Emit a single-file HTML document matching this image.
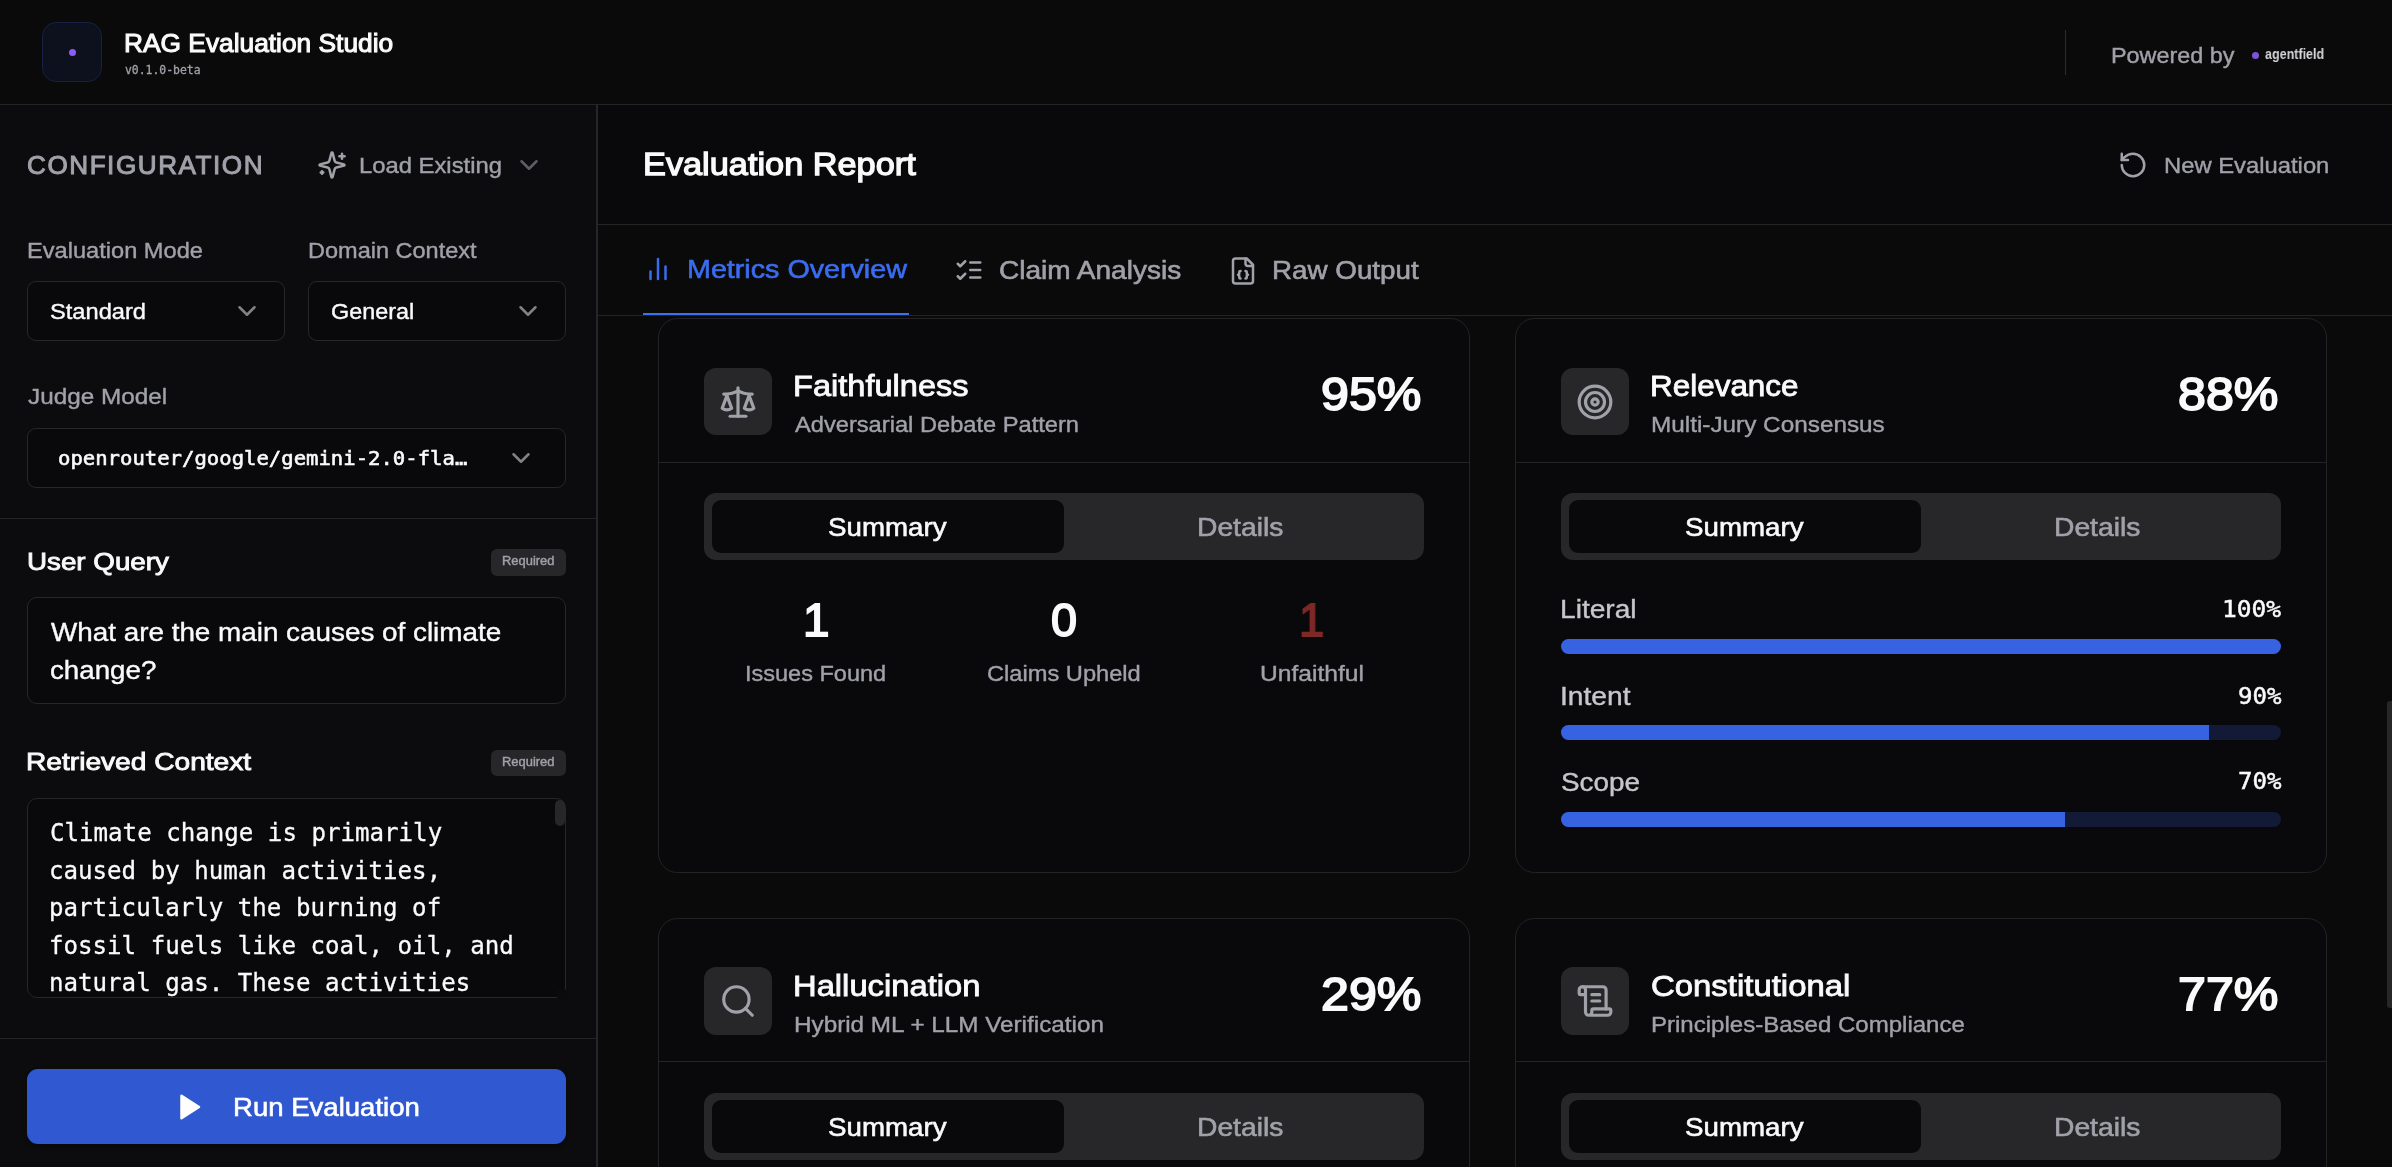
<!DOCTYPE html>
<html lang="en">
<head>
<meta charset="utf-8">
<title>RAG Evaluation Studio</title>
<style>
*{box-sizing:border-box;margin:0;padding:0}
html,body{width:2392px;height:1167px;overflow:hidden;background:#0a0a0a}
body{position:relative;font-family:"Liberation Sans",sans-serif;color:#fafafa}
.a{position:absolute}
.t{position:absolute;white-space:nowrap;line-height:1;transform-origin:0 0;will-change:transform}
.b{font-weight:700}

.mono{font-family:"DejaVu Sans Mono","Liberation Mono",monospace}
.hl{position:absolute;height:1px;background:#242427}
.vl{position:absolute;width:1px;background:#242427}
svg{position:absolute;fill:none;stroke:currentColor;stroke-width:2;stroke-linecap:round;stroke-linejoin:round;overflow:visible}
.i30{width:30px;height:30px}
.i38{width:38px;height:38px;left:15px;top:14.5px;color:#a1a1aa}
.g{color:#a1a1aa}
.sel{position:absolute;height:60px;border:1px solid #27272a;border-radius:9px;background:#09090b}
.badge{position:absolute;left:491px;width:75px;height:26.5px;border-radius:6px;background:#27272a}
.ta{position:absolute;left:27px;width:539px;border:1px solid #27272a;border-radius:10px;background:#09090b}
.card{position:absolute;width:812px;border:1px solid #232326;border-radius:19.5px;background:#09090b}
.ib{position:absolute;width:68px;height:67px;border-radius:12px;background:#27272a}
.seg{position:absolute;width:720px;height:67px;border-radius:12px;background:#27272a}
.seg i{position:absolute;left:8px;top:7px;width:352px;height:53px;border-radius:9px;background:#09090b}
.bar{position:absolute;left:1561px;width:720px;height:15px;border-radius:8px;background:#121a38;overflow:hidden}
.bar i{display:block;height:15px;background:#3763e3}
</style>
</head>
<body>
<!-- HEADER -->
<div class="a" style="left:0;top:0;width:2392px;height:104px;background:#0a0a0a"></div>
<div class="hl" style="left:0;top:104px;width:2392px"></div>
<div class="a" style="left:42px;top:22px;width:60px;height:60px;border-radius:14px;background:#0d101d;border:1px solid #182044"></div>
<div class="a" style="left:68.5px;top:48.5px;width:7px;height:7px;border-radius:50%;background:#8b5cf6"></div>
<div class="a" style="left:2065px;top:30px;width:1px;height:45px;background:#2c2c30"></div>
<div class="a" style="left:2252px;top:51.5px;width:7px;height:7px;border-radius:50%;background:#7c54d8"></div>

<!-- SIDEBAR -->
<div class="a" style="left:0;top:105px;width:596px;height:1062px;background:#0c0c0e"></div>
<div class="a" style="left:598px;top:105px;width:1794px;height:119px;background:#09090b"></div>
<div class="a" style="left:596px;top:105px;width:2px;height:1062px;background:#262629"></div>
<svg class="i30 g" style="left:317.2px;top:150px" viewBox="0 0 24 24"><path d="M9.937 15.5A2 2 0 0 0 8.5 14.063l-6.135-1.582a.5.5 0 0 1 0-.962L8.5 9.936A2 2 0 0 0 9.937 8.5l1.582-6.135a.5.5 0 0 1 .963 0L14.063 8.5A2 2 0 0 0 15.5 9.937l6.135 1.581a.5.5 0 0 1 0 .964L15.5 14.063a2 2 0 0 0-1.437 1.437l-1.582 6.135a.5.5 0 0 1-.963 0z"/><path d="M20 3v4"/><path d="M22 5h-4"/><path d="M4 17v2"/><path d="M5 18H3"/></svg>
<svg class="i30" style="left:514.2px;top:150px;color:#5e5e66" viewBox="0 0 24 24"><path d="m6 9 6 6 6-6"/></svg>

<div class="sel" style="left:27px;top:281px;width:258px"></div>
<svg class="i30" style="left:232px;top:296px;color:#828284" viewBox="0 0 24 24"><path d="m6 9 6 6 6-6"/></svg>
<div class="sel" style="left:308px;top:281px;width:258px"></div>
<svg class="i30" style="left:513px;top:296px;color:#828284" viewBox="0 0 24 24"><path d="m6 9 6 6 6-6"/></svg>
<div class="sel" style="left:27px;top:428px;width:539px"></div>
<svg class="i30" style="left:505.5px;top:443.4px;color:#828284" viewBox="0 0 24 24"><path d="m6 9 6 6 6-6"/></svg>

<div class="hl" style="left:0;top:518px;width:596px"></div>
<div class="badge" style="top:549px"></div>
<div class="ta" style="top:597px;height:107px"></div>
<div class="badge" style="top:749.5px"></div>
<div class="ta" style="top:798px;height:200px"></div>
<div class="a" style="left:555px;top:800px;width:10px;height:26px;border-radius:5px;background:#27272a"></div>
<div class="a" style="left:557px;top:990px;width:10px;height:9px;background:#0b0b0d"></div>
<div class="a" style="left:28px;top:799px;width:526px;height:198px;overflow:hidden;border-radius:9px"><div class="a" style="left:-28px;top:-799px">
<div class="t mono" style="left:50.0px;top:820.9px;font-size:24.13px;-webkit-text-stroke:0.3px">Climate change is primarily</div>
<div class="t mono" style="left:49.0px;top:859.0px;font-size:24.13px;-webkit-text-stroke:0.3px">caused by human activities,</div>
<div class="t mono" style="left:49.0px;top:896.1px;font-size:24.13px;-webkit-text-stroke:0.3px">particularly the burning of</div>
<div class="t mono" style="left:49.0px;top:933.7px;font-size:24.13px;-webkit-text-stroke:0.3px">fossil fuels like coal, oil, and</div>
<div class="t mono" style="left:49.0px;top:971.4px;font-size:24.13px;-webkit-text-stroke:0.3px">natural gas. These activities</div>
</div></div>

<div class="hl" style="left:0;top:1038px;width:596px"></div>
<div class="a" style="left:27px;top:1069px;width:539px;height:75px;border-radius:11px;background:#3059d1;box-shadow:0 2px 4px rgba(0,0,0,.3)"></div>
<svg class="i30" style="left:173.5px;top:1092px;fill:#fff;stroke:#fff" viewBox="0 0 24 24"><polygon points="6 3 20 12 6 21 6 3"/></svg>

<!-- MAIN -->
<svg class="i30 g" style="left:2117.5px;top:150px" viewBox="0 0 24 24"><path d="M3 12a9 9 0 1 0 9-9 9.75 9.75 0 0 0-6.74 2.74L3 8"/><path d="M3 3v5h5"/></svg>
<div class="hl" style="left:598px;top:224px;width:1794px"></div>
<svg class="i30" style="left:643px;top:254px;color:#3b6cf0" viewBox="0 0 24 24"><path d="M18 20V10"/><path d="M12 20V4"/><path d="M6 20v-6"/></svg>
<svg class="i30 g" style="left:954px;top:255px" viewBox="0 0 24 24"><path d="m3 17 2 2 4-4"/><path d="m3 7 2 2 4-4"/><path d="M13 6h8"/><path d="M13 12h8"/><path d="M13 18h8"/></svg>
<svg class="i30 g" style="left:1228px;top:255.5px" viewBox="0 0 24 24"><path d="M15 2H6a2 2 0 0 0-2 2v16a2 2 0 0 0 2 2h12a2 2 0 0 0 2-2V7Z"/><path d="M14 2v4a2 2 0 0 0 2 2h4"/><path d="M10 12a1 1 0 0 0-1 1v1a1 1 0 0 1-1 1 1 1 0 0 1 1 1v1a1 1 0 0 0 1 1"/><path d="M14 18a1 1 0 0 0 1-1v-1a1 1 0 0 1 1-1 1 1 0 0 1-1-1v-1a1 1 0 0 0-1-1"/></svg>
<div class="hl" style="left:598px;top:315px;width:1794px"></div>
<div class="a" style="left:643px;top:312.7px;width:266px;height:2.6px;background:#3d6ff3"></div>

<!-- Faithfulness -->
<div class="card" style="left:658px;top:318px;height:555px"></div>
<div class="ib" style="left:704px;top:368px"><svg class="i38" viewBox="0 0 24 24"><path d="m16 16 3-8 3 8c-.87.65-1.92 1-3 1s-2.13-.35-3-1Z"/><path d="m2 16 3-8 3 8c-.87.65-1.92 1-3 1s-2.13-.35-3-1Z"/><path d="M7 21h10"/><path d="M12 3v18"/><path d="M3 7h2c2 0 5-1 7-2 2 1 5 2 7 2h2"/></svg></div>
<div class="hl" style="left:659px;top:462px;width:810px"></div>
<div class="seg" style="left:704px;top:493px"><i></i></div>

<!-- Relevance -->
<div class="card" style="left:1515px;top:318px;height:555px"></div>
<div class="ib" style="left:1561px;top:368px"><svg class="i38" viewBox="0 0 24 24"><circle cx="12" cy="12" r="10"/><circle cx="12" cy="12" r="6"/><circle cx="12" cy="12" r="2"/></svg></div>
<div class="hl" style="left:1516px;top:462px;width:810px"></div>
<div class="seg" style="left:1561px;top:493px"><i></i></div>
<div class="bar" style="top:639px"><i style="width:100%"></i></div>
<div class="bar" style="top:725px"><i style="width:90%"></i></div>
<div class="bar" style="top:812px"><i style="width:70%"></i></div>

<!-- Hallucination -->
<div class="card" style="left:658px;top:917.5px;height:555px"></div>
<div class="ib" style="left:704px;top:967px;height:68px"><svg class="i38" viewBox="0 0 24 24"><circle cx="11" cy="11" r="8"/><path d="m21 21-4.3-4.3"/></svg></div>
<div class="hl" style="left:659px;top:1061px;width:810px"></div>
<div class="seg" style="left:704px;top:1092.5px"><i></i></div>

<!-- Constitutional -->
<div class="card" style="left:1515px;top:917.5px;height:555px"></div>
<div class="ib" style="left:1561px;top:967px;height:68px"><svg class="i38" viewBox="0 0 24 24"><path d="M15 12h-5"/><path d="M15 8h-5"/><path d="M19 17V5a2 2 0 0 0-2-2H4"/><path d="M8 21h12a2 2 0 0 0 2-2v-1a1 1 0 0 0-1-1H11a1 1 0 0 0-1 1v1a2 2 0 1 1-4 0V5a2 2 0 1 0-4 0v2a1 1 0 0 0 1 1h3"/></svg></div>
<div class="hl" style="left:1516px;top:1061px;width:810px"></div>
<div class="seg" style="left:1561px;top:1092.5px"><i></i></div>

<!-- main scrollbar thumb -->
<div class="a" style="left:2387px;top:701px;width:5px;height:307px;border-radius:3px 0 0 3px;background:#27272a"></div>

<!-- TEXT -->
<div class="t" style="left:123.5px;top:30.9px;font-size:25.53px;transform:scaleX(1.0314);-webkit-text-stroke:1.05px">RAG Evaluation Studio</div>
<div class="t mono" style="left:125.2px;top:64.8px;font-size:11.38px;transform:scaleX(1.0029);color:#a1a1aa;-webkit-text-stroke:0.3px">v0.1.0-beta</div>
<div class="t" style="left:2111.3px;top:44.5px;font-size:22.64px;transform:scaleX(1.0337);color:#a1a1aa;-webkit-text-stroke:0.4px">Powered by</div>
<div class="t b" style="left:2265.2px;top:47.0px;font-size:14.3px;transform:scaleX(0.8759);color:#d4d4d8">agentfield</div>
<div class="t" style="left:27.3px;top:151.6px;font-size:26.1px;letter-spacing:1.55px;color:#a1a1aa;-webkit-text-stroke:1.0px">CONFIGURATION</div>
<div class="t" style="left:358.8px;top:154.7px;font-size:22.64px;transform:scaleX(1.0523);color:#a1a1aa;-webkit-text-stroke:0.4px">Load Existing</div>
<div class="t" style="left:27.4px;top:240.0px;font-size:22.64px;transform:scaleX(1.0439);color:#a1a1aa;-webkit-text-stroke:0.4px">Evaluation Mode</div>
<div class="t" style="left:308.0px;top:240.0px;font-size:22.64px;transform:scaleX(1.0392);color:#a1a1aa;-webkit-text-stroke:0.4px">Domain Context</div>
<div class="t" style="left:50.4px;top:300.6px;font-size:22.64px;transform:scaleX(1.0448);-webkit-text-stroke:0.4px">Standard</div>
<div class="t" style="left:331.2px;top:300.6px;font-size:22.64px;transform:scaleX(1.0334);-webkit-text-stroke:0.4px">General</div>
<div class="t" style="left:27.8px;top:385.7px;font-size:22.64px;transform:scaleX(1.0735);color:#a1a1aa;-webkit-text-stroke:0.4px">Judge Model</div>
<div class="t mono" style="left:57.5px;top:448.0px;font-size:20.06px;transform:scaleX(1.0276);-webkit-text-stroke:0.6px">openrouter/google/gemini-2.0-fla…</div>
<div class="t" style="left:27.0px;top:550.4px;font-size:24.84px;transform:scaleX(1.1176);-webkit-text-stroke:0.9px">User Query</div>
<div class="t" style="left:501.6px;top:554.9px;font-size:12.44px;transform:scaleX(1.0389);color:#a1a1aa;-webkit-text-stroke:0.4px">Required</div>
<div class="t" style="left:51.1px;top:618.7px;font-size:26.14px;transform:scaleX(1.0653);-webkit-text-stroke:0.4px">What are the main causes of climate</div>
<div class="t" style="left:50.1px;top:656.5px;font-size:26.14px;transform:scaleX(1.0604);-webkit-text-stroke:0.4px">change?</div>
<div class="t" style="left:25.8px;top:750.4px;font-size:24.84px;transform:scaleX(1.1329);-webkit-text-stroke:0.9px">Retrieved Context</div>
<div class="t" style="left:501.6px;top:755.5px;font-size:12.44px;transform:scaleX(1.0389);color:#a1a1aa;-webkit-text-stroke:0.4px">Required</div>
<div class="t" style="left:232.7px;top:1094.7px;font-size:25.76px;transform:scaleX(1.0697);color:#ffffff;-webkit-text-stroke:0.6px">Run Evaluation</div>
<div class="t" style="left:642.9px;top:149.3px;font-size:31.68px;transform:scaleX(1.0833);-webkit-text-stroke:1.3px">Evaluation Report</div>
<div class="t" style="left:2163.7px;top:154.7px;font-size:22.64px;transform:scaleX(1.0518);color:#a1a1aa;-webkit-text-stroke:0.4px">New Evaluation</div>
<div class="t" style="left:687.1px;top:256.8px;font-size:25.76px;transform:scaleX(1.1138);color:#3b6cf0;-webkit-text-stroke:0.6px">Metrics Overview</div>
<div class="t" style="left:998.9px;top:257.8px;font-size:25.76px;transform:scaleX(1.0879);color:#a1a1aa;-webkit-text-stroke:0.6px">Claim Analysis</div>
<div class="t" style="left:1271.8px;top:257.8px;font-size:25.76px;transform:scaleX(1.0788);color:#a1a1aa;-webkit-text-stroke:0.6px">Raw Output</div>
<div class="t" style="left:793.2px;top:371.4px;font-size:29.51px;transform:scaleX(1.1040);-webkit-text-stroke:0.85px">Faithfulness</div>
<div class="t" style="left:794.9px;top:413.8px;font-size:22.64px;transform:scaleX(1.0455);color:#a1a1aa;-webkit-text-stroke:0.4px">Adversarial Debate Pattern</div>
<div class="t" style="left:1320.8px;top:370.8px;font-size:46.79px;transform:scaleX(1.0715);-webkit-text-stroke:1.8px">95%</div>
<div class="t" style="left:827.7px;top:514.7px;font-size:25.76px;transform:scaleX(1.0756);-webkit-text-stroke:0.6px">Summary</div>
<div class="t" style="left:1196.5px;top:514.7px;font-size:25.76px;transform:scaleX(1.0964);color:#a1a1aa;-webkit-text-stroke:0.6px">Details</div>
<div class="t" style="left:802.9px;top:596.6px;font-size:46.79px;transform:scaleX(1.0175);-webkit-text-stroke:1.8px">1</div>
<div class="t" style="left:1051.2px;top:596.6px;font-size:46.79px;transform:scaleX(1.0000);-webkit-text-stroke:1.8px">0</div>
<div class="t" style="left:1298.7px;top:596.6px;font-size:46.79px;transform:scaleX(0.9693);color:#7e2926;-webkit-text-stroke:1.8px">1</div>
<div class="t" style="left:745.2px;top:663.1px;font-size:22.64px;transform:scaleX(1.0393);color:#a1a1aa;-webkit-text-stroke:0.4px">Issues Found</div>
<div class="t" style="left:986.7px;top:663.1px;font-size:22.64px;transform:scaleX(1.0450);color:#a1a1aa;-webkit-text-stroke:0.4px">Claims Upheld</div>
<div class="t" style="left:1259.7px;top:663.1px;font-size:22.64px;transform:scaleX(1.0867);color:#a1a1aa;-webkit-text-stroke:0.4px">Unfaithful</div>
<div class="t" style="left:1650.2px;top:371.4px;font-size:29.51px;transform:scaleX(1.0658);-webkit-text-stroke:0.85px">Relevance</div>
<div class="t" style="left:1650.8px;top:413.8px;font-size:22.64px;transform:scaleX(1.0747);color:#a1a1aa;-webkit-text-stroke:0.4px">Multi-Jury Consensus</div>
<div class="t" style="left:2177.8px;top:370.8px;font-size:46.79px;transform:scaleX(1.0715);-webkit-text-stroke:1.8px">88%</div>
<div class="t" style="left:1684.7px;top:514.7px;font-size:25.76px;transform:scaleX(1.0756);-webkit-text-stroke:0.6px">Summary</div>
<div class="t" style="left:2053.5px;top:514.7px;font-size:25.76px;transform:scaleX(1.0964);color:#a1a1aa;-webkit-text-stroke:0.6px">Details</div>
<div class="t" style="left:1559.9px;top:596.1px;font-size:26.04px;transform:scaleX(1.0800);color:#c6c6cb;-webkit-text-stroke:0.4px">Literal</div>
<div class="t" style="left:1559.9px;top:683.0px;font-size:26.04px;transform:scaleX(1.0825);color:#c6c6cb;-webkit-text-stroke:0.4px">Intent</div>
<div class="t" style="left:1560.9px;top:769.1px;font-size:26.04px;transform:scaleX(1.0697);color:#c6c6cb;-webkit-text-stroke:0.4px">Scope</div>
<div class="t mono" style="left:2222.2px;top:597.5px;font-size:23.7px;transform:scaleX(1.0347);-webkit-text-stroke:0.5px">100%</div>
<div class="t mono" style="left:2237.7px;top:684.5px;font-size:23.7px;transform:scaleX(1.0161);-webkit-text-stroke:0.5px">90%</div>
<div class="t mono" style="left:2237.7px;top:770.2px;font-size:23.7px;transform:scaleX(1.0161);-webkit-text-stroke:0.5px">70%</div>
<div class="t" style="left:793.2px;top:971.4px;font-size:29.51px;transform:scaleX(1.1097);-webkit-text-stroke:0.85px">Hallucination</div>
<div class="t" style="left:793.8px;top:1013.8px;font-size:22.64px;transform:scaleX(1.0722);color:#a1a1aa;-webkit-text-stroke:0.4px">Hybrid ML + LLM Verification</div>
<div class="t" style="left:1320.8px;top:970.8px;font-size:46.79px;transform:scaleX(1.0715);-webkit-text-stroke:1.8px">29%</div>
<div class="t" style="left:827.7px;top:1114.7px;font-size:25.76px;transform:scaleX(1.0756);-webkit-text-stroke:0.6px">Summary</div>
<div class="t" style="left:1196.5px;top:1114.7px;font-size:25.76px;transform:scaleX(1.0964);color:#a1a1aa;-webkit-text-stroke:0.6px">Details</div>
<div class="t" style="left:1651.3px;top:971.4px;font-size:29.51px;transform:scaleX(1.1156);-webkit-text-stroke:0.85px">Constitutional</div>
<div class="t" style="left:1650.9px;top:1013.8px;font-size:22.64px;transform:scaleX(1.0621);color:#a1a1aa;-webkit-text-stroke:0.4px">Principles-Based Compliance</div>
<div class="t" style="left:2177.8px;top:970.8px;font-size:46.79px;transform:scaleX(1.0715);-webkit-text-stroke:1.8px">77%</div>
<div class="t" style="left:1684.7px;top:1114.7px;font-size:25.76px;transform:scaleX(1.0756);-webkit-text-stroke:0.6px">Summary</div>
<div class="t" style="left:2053.5px;top:1114.7px;font-size:25.76px;transform:scaleX(1.0964);color:#a1a1aa;-webkit-text-stroke:0.6px">Details</div>
</body>
</html>
